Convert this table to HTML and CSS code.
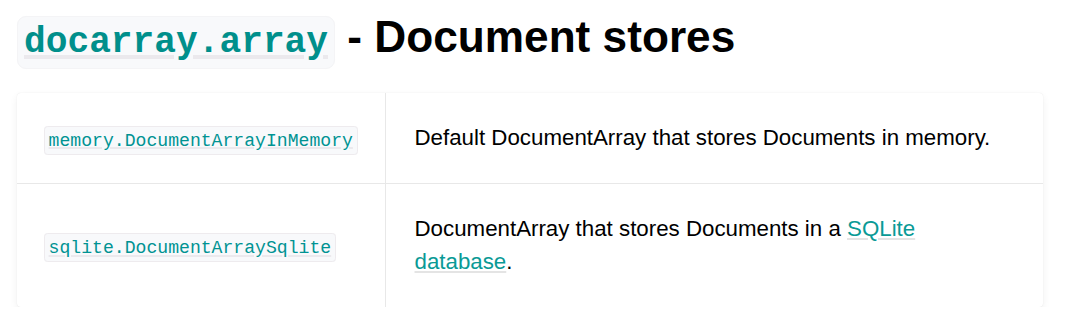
FILE: index.html
```html
<!DOCTYPE html>
<html lang="en">
<head>
<meta charset="utf-8">
<title>docarray.array - Document stores</title>
<link rel="stylesheet" href="styles.css">
</head>
<body>
<main class="page">
  <h1 class="title"><a class="ref" href="#"><code class="code code-title">docarray.array</code></a> - Document stores</h1>
  <table class="stores">
    <tbody>
      <tr>
        <td class="cell cell-name"><a class="ref" href="#"><code class="code">memory.DocumentArrayInMemory</code></a></td>
        <td class="cell cell-desc">Default DocumentArray that stores Documents in memory.</td>
      </tr>
      <tr>
        <td class="cell cell-name"><a class="ref" href="#"><code class="code">sqlite.DocumentArraySqlite</code></a></td>
        <td class="cell cell-desc">DocumentArray that stores Documents in a <a class="link" href="#">SQLite</a> <a class="link" href="#">database</a>.</td>
      </tr>
    </tbody>
  </table>
</main>
</body>
</html>
```

FILE: styles.css
```css
html, body {
  margin: 0;
  padding: 0;
  background: #ffffff;
}

body {
  font-family: "Liberation Sans", Arial, sans-serif;
  font-size: 22.3px;
  line-height: 1.5;
  color: #000000;
}

.page {
  padding: 9px 30px 0 17px;
}

.title {
  margin: 0 0 29px 0;
  font-size: 44.2px;
  font-weight: 700;
  line-height: 1.25;
}

.ref {
  color: #009191;
  text-decoration: underline;
  text-decoration-color: #ebe9ed;
}

.code {
  font-family: "Liberation Mono", "Courier New", monospace;
  font-size: 81.25%;
  line-height: 1;
  color: #009393;
  background: #f8f9fb;
  border: 1px solid #eeebee;
  border-radius: 0.2em;
  padding: 0.2em 0.2em;
}

.code-title {
  font-size: 36.2px;
  font-weight: 700;
  color: #008f8b;
  padding: 0.15em 6px;
  border-color: #f4f4f6;
  border-radius: 0.25em;
}

.stores {
  width: 1026px;
  border-collapse: collapse;
  border-spacing: 0;
  border-radius: 4px;
  box-shadow: 0 3px 8px rgba(0, 0, 0, 0.06), 0 0 1px rgba(0, 0, 0, 0.12);
}

.cell {
  padding: 28px 27px;
  line-height: 33.5px;
  vertical-align: middle;
  text-align: left;
}

.stores tr:first-child .cell {
  border-bottom: 1px solid #e8e8e8;
}

.cell-name {
  width: 1px;
  white-space: nowrap;
  border-right: 1px solid #e8e8e8;
}

.cell-desc {
  padding-left: 29px;
}

.link {
  color: #0a9a96;
  text-decoration: underline;
  text-decoration-color: #e4e4e4;
}
```
